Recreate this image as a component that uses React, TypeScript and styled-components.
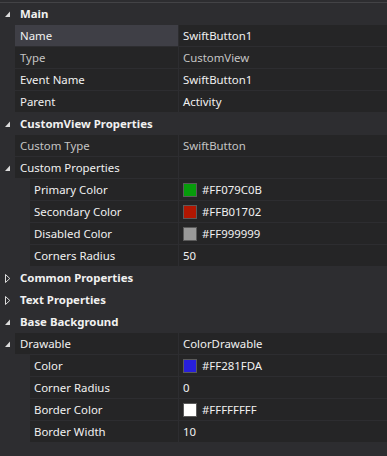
import React from "react";
import styled, { createGlobalStyle } from "styled-components";

const GlobalStyle = createGlobalStyle`
  html, body {
    margin: 0;
    padding: 0;
    background: #2d2d30;
    font-family: "Noto Sans", "Open Sans", sans-serif;
    font-size: 11.4px;
    color: #f1f1f1;
  }
`;

const Grid = styled.div`
  margin-top: 2px;
  border-top: 1px solid #434346;
  display: flex;
  flex-direction: column;
  width: 387px;
`;

const Row = styled.div`
  display: flex;
  height: 22px;
  line-height: 20px;
`;

const Gutter = styled.div<{ $width: number }>`
  width: ${(p) => p.$width}px;
  flex: none;
  display: flex;
  align-items: center;
  padding-left: 5px;
  box-sizing: border-box;
`;

const CategoryLabel = styled.div`
  display: flex;
  align-items: center;
  font-weight: 700;
  color: #f1f1f1;
`;

const NameCell = styled.div<{ $selected?: boolean; $muted?: boolean; $pad: number }>`
  flex: none;
  width: ${(p) => 178 - (p.$pad === 4 ? 30 : 15)}px;
  padding-left: ${(p) => p.$pad}px;
  box-sizing: border-box;
  display: flex;
  align-items: center;
  background: ${(p) => (p.$selected ? "#3f3f46" : "#252526")};
  color: ${(p) => (p.$muted ? "#c4c4c4" : "#f1f1f1")};
  border-bottom: 1px solid #2d2d30;
  white-space: nowrap;
`;

const ValueCell = styled.div<{ $muted?: boolean }>`
  flex: 1;
  display: flex;
  align-items: center;
  gap: 5px;
  padding-left: 4px;
  background: #252526;
  border-left: 1px solid #2d2d30;
  border-bottom: 1px solid #2d2d30;
  color: ${(p) => (p.$muted ? "#c4c4c4" : "#f1f1f1")};
  white-space: nowrap;
`;

const Swatch = styled.span<{ $color: string }>`
  width: 12px;
  height: 12px;
  background: ${(p) => p.$color};
  border: 1px solid #5a5a5a;
  flex: none;
`;

const Expander = ({ open }: { open: boolean }) =>
  open ? (
    <svg width="6" height="8" viewBox="0 0 6 8">
      <polygon points="5,1.5 5,7 0,7" fill="#dcdcdc" />
    </svg>
  ) : (
    <svg width="6" height="9" viewBox="0 0 6 9">
      <polygon
        points="0.5,0.5 4.8,4.5 0.5,8.5"
        fill="none"
        stroke="#dcdcdc"
        strokeWidth="1"
      />
    </svg>
  );

type Item =
  | { kind: "cat"; label: string; open: boolean }
  | {
      kind: "prop";
      name: string;
      value?: string;
      level: 1 | 2;
      open?: boolean;
      muted?: boolean;
      color?: string;
      selected?: boolean;
    };

const items: Item[] = [
  { kind: "cat", label: "Main", open: true },
  { kind: "prop", name: "Name", value: "SwiftButton1", level: 1, selected: true },
  { kind: "prop", name: "Type", value: "CustomView", level: 1, muted: true },
  { kind: "prop", name: "Event Name", value: "SwiftButton1", level: 1 },
  { kind: "prop", name: "Parent", value: "Activity", level: 1 },
  { kind: "cat", label: "CustomView Properties", open: true },
  { kind: "prop", name: "Custom Type", value: "SwiftButton", level: 1, muted: true },
  { kind: "prop", name: "Custom Properties", level: 1, open: true },
  { kind: "prop", name: "Primary Color", value: "#FF079C0B", level: 2, color: "#079c0b" },
  { kind: "prop", name: "Secondary Color", value: "#FFB01702", level: 2, color: "#b01702" },
  { kind: "prop", name: "Disabled Color", value: "#FF999999", level: 2, color: "#999999" },
  { kind: "prop", name: "Corners Radius", value: "50", level: 2 },
  { kind: "cat", label: "Common Properties", open: false },
  { kind: "cat", label: "Text Properties", open: false },
  { kind: "cat", label: "Base Background", open: true },
  { kind: "prop", name: "Drawable", value: "ColorDrawable", level: 1, open: true },
  { kind: "prop", name: "Color", value: "#FF281FDA", level: 2, color: "#281fda" },
  { kind: "prop", name: "Corner Radius", value: "0", level: 2 },
  { kind: "prop", name: "Border Color", value: "#FFFFFFFF", level: 2, color: "#ffffff" },
  { kind: "prop", name: "Border Width", value: "10", level: 2 },
];

const App = () => {
  return (
    <>
      <GlobalStyle />
      <Grid>
        {items.map((item, i) => {
          if (item.kind === "cat") {
            return (
              <Row key={i}>
                <Gutter $width={20}>
                  <Expander open={item.open} />
                </Gutter>
                <CategoryLabel>{item.label}</CategoryLabel>
              </Row>
            );
          }
          return (
            <Row key={i}>
              <Gutter $width={item.level === 1 ? 15 : 30}>
                {item.open !== undefined && <Expander open={item.open} />}
              </Gutter>
              <NameCell
                $pad={item.level === 1 ? 5 : 4}
                $selected={item.selected}
                $muted={item.muted}
              >
                {item.name}
              </NameCell>
              <ValueCell $muted={item.muted}>
                {item.color && <Swatch $color={item.color} />}
                {item.value}
              </ValueCell>
            </Row>
          );
        })}
      </Grid>
    </>
  );
};

export default App;
